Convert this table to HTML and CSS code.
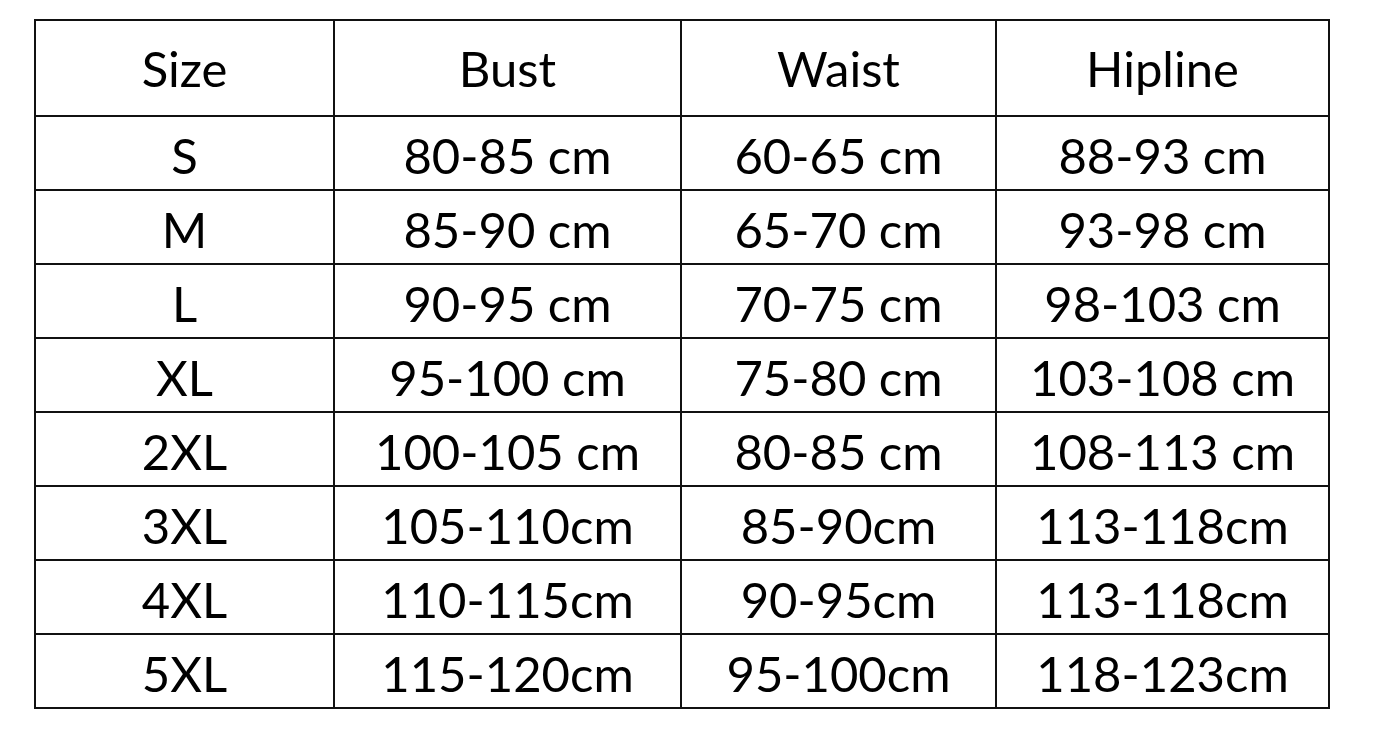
FILE: index.html
```html
<!DOCTYPE html>
<html>
<head>
<meta charset="utf-8">
<link rel="stylesheet" href="styles.css">
</head>
<body>
<table class="size-table">
  <colgroup>
    <col class="c1"><col class="c2"><col class="c3"><col class="c4">
  </colgroup>
  <thead>
    <tr class="head"><th>Size</th><th>Bust</th><th>Waist</th><th>Hipline</th></tr>
  </thead>
  <tbody>
    <tr><td>S</td><td>80-85 cm</td><td>60-65 cm</td><td>88-93 cm</td></tr>
    <tr><td>M</td><td>85-90 cm</td><td>65-70 cm</td><td>93-98 cm</td></tr>
    <tr><td>L</td><td>90-95 cm</td><td>70-75 cm</td><td>98-103 cm</td></tr>
    <tr><td>XL</td><td>95-100 cm</td><td>75-80 cm</td><td>103-108 cm</td></tr>
    <tr><td>2XL</td><td>100-105 cm</td><td>80-85 cm</td><td>108-113 cm</td></tr>
    <tr><td>3XL</td><td>105-110cm</td><td>85-90cm</td><td>113-118cm</td></tr>
    <tr><td>4XL</td><td>110-115cm</td><td>90-95cm</td><td>113-118cm</td></tr>
    <tr><td>5XL</td><td>115-120cm</td><td>95-100cm</td><td>118-123cm</td></tr>
  </tbody>
</table>
</body>
</html>
```
FILE: styles.css
```css
html, body {
  margin: 0;
  padding: 0;
  background: #fff;
}
body {
  padding: 19px 0 0 34px;
  font-family: Lato, "Open Sans", "Liberation Sans", sans-serif;
  color: #000;
}
.size-table {
  border-collapse: collapse;
  table-layout: fixed;
  width: 1294px;
}
.c1 { width: 299px; }
.c2 { width: 347px; }
.c3 { width: 315px; }
.c4 { width: 333px; }
.size-table th,
.size-table td {
  border: 2px solid #111;
  text-align: center;
  vertical-align: middle;
  font-size: 49px;
  font-weight: 400;
  padding: 0;
  line-height: 1;
}
.size-table .head th {
  height: 94px;
  padding-top: 0;
}
.size-table td {
  height: 68px;
  padding-top: 4px;
}
```
